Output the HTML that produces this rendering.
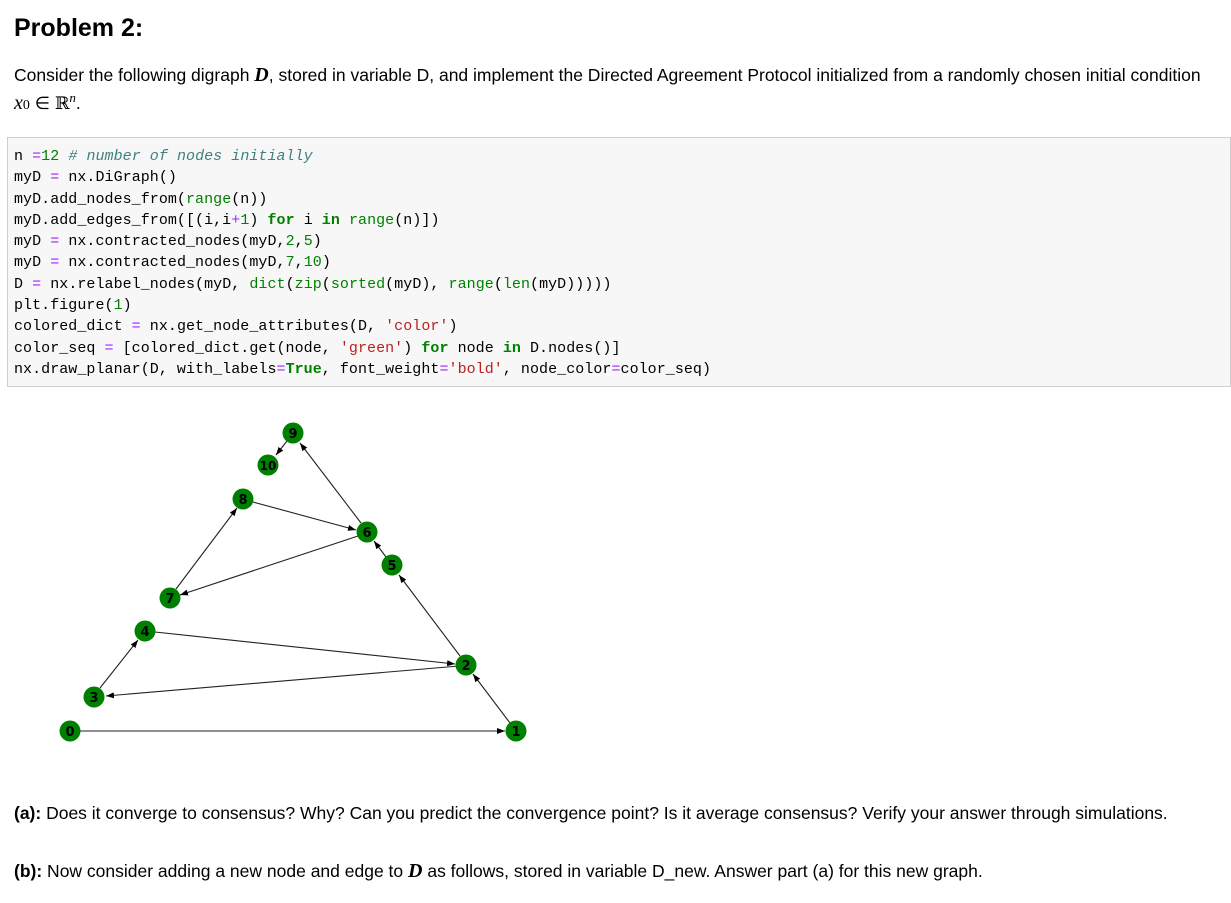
<!DOCTYPE html>
<html><head><meta charset="utf-8"><style>
body{margin:0;width:1231px;height:903px;background:#fff;font-family:"Liberation Sans",Arial,sans-serif;color:#000;position:relative;overflow:hidden}
.t{position:absolute;white-space:nowrap}
h1{position:absolute;left:14px;top:14px;margin:0;font-size:25px;font-weight:bold}
.p{font-size:17.5px}
.m{font-family:"Liberation Serif",serif;font-style:italic;font-weight:bold;font-size:20px}
.code{position:absolute;left:7px;top:137px;width:1222px;height:248px;background:#f7f7f7;border:1px solid #cfcfcf}
pre{margin:0;position:absolute;left:6px;top:8px;font-family:"Liberation Mono",monospace;font-size:15px;line-height:21.3px;color:#000;letter-spacing:0.05px}
.c{color:#408080;font-style:italic}.o{color:#aa22ff}.g{color:#008000}.k{color:#008000;font-weight:bold}.s{color:#ba2121}.n{color:#008000}
</style></head><body>
<h1>Problem 2:</h1>
<div class="t p" style="left:14px;top:64px">Consider the following digraph <span class="m">D</span>, stored in variable D, and implement the Directed Agreement Protocol initialized from a randomly chosen initial condition</div>
<div class="t p" style="left:14px;top:90px"><span style="font-family:'Liberation Serif',serif;font-style:italic;font-size:20px">x</span><span style="font-family:'Liberation Serif',serif;font-size:14px">0</span> ∈ <span style="font-family:'DejaVu Serif',serif">ℝ</span><sup style="font-family:'Liberation Serif',serif;font-style:italic;font-size:13px">n</sup>.</div>
<div class="code"><pre>n <span class="o">=</span><span class="n">12</span> <span class="c"># number of nodes initially</span>
myD <span class="o">=</span> nx.DiGraph()
myD.add_nodes_from(<span class="g">range</span>(n))
myD.add_edges_from([(i,i<span class="o">+</span><span class="n">1</span>) <span class="k">for</span> i <span class="k">in</span> <span class="g">range</span>(n)])
myD <span class="o">=</span> nx.contracted_nodes(myD,<span class="n">2</span>,<span class="n">5</span>)
myD <span class="o">=</span> nx.contracted_nodes(myD,<span class="n">7</span>,<span class="n">10</span>)
D <span class="o">=</span> nx.relabel_nodes(myD, <span class="g">dict</span>(<span class="g">zip</span>(<span class="g">sorted</span>(myD), <span class="g">range</span>(<span class="g">len</span>(myD)))))
plt.figure(<span class="n">1</span>)
colored_dict <span class="o">=</span> nx.get_node_attributes(D, <span class="s">'color'</span>)
color_seq <span class="o">=</span> [colored_dict.get(node, <span class="s">'green'</span>) <span class="k">for</span> node <span class="k">in</span> D.nodes()]
nx.draw_planar(D, with_labels<span class="o">=</span><span class="k">True</span>, font_weight<span class="o">=</span><span class="s">'bold'</span>, node_color<span class="o">=</span>color_seq)</pre></div>
<svg class="t" style="left:0;top:0" width="1231" height="903">
<defs><marker id="a" markerWidth="8" markerHeight="6" refX="8" refY="3" orient="auto" markerUnits="userSpaceOnUse"><path d="M0,0L8,3L0,6z" fill="#000"/></marker></defs>
<g stroke="#222" stroke-width="1.1" marker-end="url(#a)">
<line x1="80" y1="731" x2="505" y2="731"/>
<line x1="510" y1="723" x2="473" y2="674"/>
<line x1="459" y1="666" x2="106" y2="696"/>
<line x1="155" y1="632" x2="455" y2="664"/>
<line x1="100" y1="688" x2="138" y2="640"/>
<line x1="460" y1="656" x2="399" y2="575"/>
<line x1="386" y1="557" x2="374" y2="541"/>
<line x1="358" y1="536" x2="180" y2="595"/>
<line x1="176" y1="589" x2="237" y2="508"/>
<line x1="253" y1="502" x2="356" y2="530"/>
<line x1="361" y1="523" x2="300" y2="443"/>
<line x1="287" y1="441" x2="276" y2="455"/>
</g>
<g fill="#008000">
<circle cx="70" cy="731" r="10.5"/><circle cx="516" cy="731" r="10.5"/><circle cx="466" cy="665" r="10.5"/><circle cx="94" cy="697" r="10.5"/><circle cx="145" cy="631" r="10.5"/><circle cx="392" cy="565" r="10.5"/><circle cx="367" cy="532" r="10.5"/><circle cx="170" cy="598" r="10.5"/><circle cx="243" cy="499" r="10.5"/><circle cx="293" cy="433" r="10.5"/><circle cx="268" cy="465" r="10.5"/>
</g>
<g font-family="DejaVu Sans,sans-serif" font-weight="bold" font-size="13" text-anchor="middle" fill="#000">
<text x="70" y="736">0</text><text x="516" y="736">1</text><text x="466" y="670">2</text><text x="94" y="702">3</text><text x="145" y="636">4</text><text x="392" y="570">5</text><text x="367" y="537">6</text><text x="170" y="603">7</text><text x="243" y="504">8</text><text x="293" y="438">9</text><text x="268" y="470" font-size="12">10</text>
</g>
</svg>
<div class="t p" style="left:14px;top:803px"><b>(a):</b> Does it converge to consensus? Why? Can you predict the convergence point? Is it average consensus? Verify your answer through simulations.</div>
<div class="t p" style="left:14px;top:860px"><b>(b):</b> Now consider adding a new node and edge to <span class="m">D</span> as follows, stored in variable D_new. Answer part (a) for this new graph.</div>
</body></html>
